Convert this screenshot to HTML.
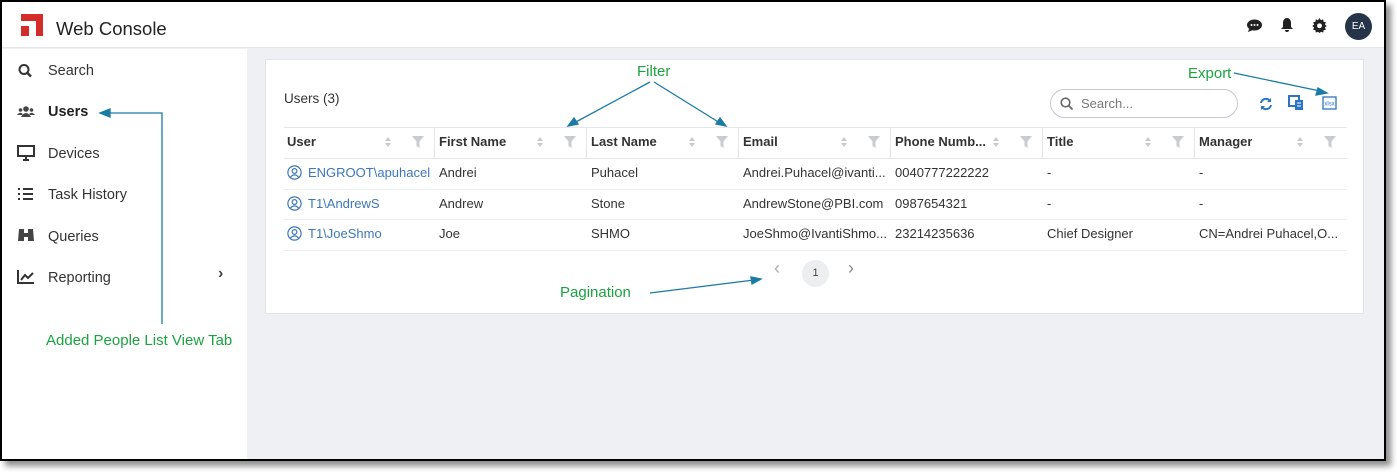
<!DOCTYPE html>
<html><head><style>
*{box-sizing:border-box;margin:0;padding:0}
body{width:1397px;height:475px;background:#fff;font-family:"Liberation Sans",sans-serif;position:relative;overflow:hidden}
.frame{position:absolute;left:0;top:0;width:1386px;height:461px;border:2px solid #000;background:#eef0f3;overflow:hidden;box-shadow:5px 5px 6px rgba(0,0,0,.45)}
.top{position:absolute;left:0;top:0;right:0;height:46px;background:#fff;border-bottom:1px solid #e3e6ea}
.side{position:absolute;left:0;top:47px;width:245px;bottom:0;background:#fff}
.nav{position:absolute;left:46px;font-size:14.5px;color:#333}
.ico{position:absolute;left:15px;width:18px;height:16px;color:#444}
.card{position:absolute;left:263px;top:57px;width:1099px;height:255px;background:#fff;border:1px solid #e1e4e8}
.th,.td{position:absolute;font-size:13px;color:#333;white-space:nowrap;overflow:hidden}
.th{font-weight:bold;color:#333}
.lnk{color:#3d78b8}
.g{color:#1aa340;font-size:15px;position:absolute}
.sort{position:absolute;width:8px;height:12px}
</style></head><body>
<div class="frame">
<div class="top">
 <svg style="position:absolute;left:19px;top:12px" width="22" height="22"><path d="M0 0H22V22H15V7H0Z M0 12H8V22H0Z" fill="#d62b2b"/></svg>
 <div style="position:absolute;left:54px;top:16px;font-size:18.5px;color:#222">Web Console</div>
 <svg style="position:absolute;left:1245px;top:17px" width="15" height="13"><ellipse cx="7.5" cy="6" rx="7.5" ry="5.5" fill="#222"/><path d="M2 10L1 13L6 11Z" fill="#222"/><circle cx="4.5" cy="6" r="1" fill="#fff"/><circle cx="7.5" cy="6" r="1" fill="#fff"/><circle cx="10.5" cy="6" r="1" fill="#fff"/></svg>
 <svg style="position:absolute;left:1278px;top:15px" width="14" height="16"><path d="M7 1C4 1 3 4 3 6V10L1 12H13L11 10V6C11 4 10 1 7 1Z M5 13H9A2 2 0 0 1 5 13Z" fill="#222"/></svg>
 <svg style="position:absolute;left:1310px;top:16px" width="15" height="15" viewBox="0 0 16 16"><path d="M8 0L9.5 2.2 12 1.5 12.3 4 14.8 4.5 13.8 7 15.8 8.5 13.8 10 14.8 12.5 12.3 13 12 15.5 9.5 14.8 8 16 6.5 14.8 4 15.5 3.7 13 1.2 12.5 2.2 10 0.2 8.5 2.2 7 1.2 4.5 3.7 4 4 1.5 6.5 2.2Z" fill="#222"/><circle cx="8" cy="8.3" r="2.6" fill="#fff"/></svg>
 <div style="position:absolute;left:1343px;top:11px;width:27px;height:27px;border-radius:50%;background:#263449;color:#fff;font-size:10px;text-align:center;line-height:27px">EA</div>
</div>
<div class="side">
 <svg class="ico" style="top:14px" viewBox="0 0 18 16"><circle cx="7" cy="6.5" r="4.5" fill="none" stroke="#333" stroke-width="2"/><path d="M10.5 10L14 13.5" stroke="#333" stroke-width="2.5"/></svg><div class="nav" style="top:14px">Search</div>
 <svg class="ico" style="top:55px" viewBox="0 0 18 16"><circle cx="9" cy="5" r="2.8" fill="#444"/><circle cx="3.5" cy="6" r="1.8" fill="#444"/><circle cx="14.5" cy="6" r="1.8" fill="#444"/><path d="M4 13Q9 5 14 13Z M0 11Q3 7 6 10L5 11Z M18 11Q15 7 12 10L13 11Z" fill="#444"/></svg><div class="nav" style="top:55px;font-weight:bold;color:#222">Users</div>
 <svg class="ico" style="top:96px" viewBox="0 0 18 16"><rect x="1" y="1" width="16" height="10" fill="none" stroke="#333" stroke-width="2"/><path d="M6 15H12M9 11V15" stroke="#333" stroke-width="2"/></svg><div class="nav" style="top:97px">Devices</div>
 <svg class="ico" style="top:137px" viewBox="0 0 18 16"><path d="M1 3H3M6 3H16M1 8H3M6 8H16M1 13H3M6 13H16" stroke="#333" stroke-width="2"/></svg><div class="nav" style="top:138px">Task History</div>
 <svg class="ico" style="top:178px" viewBox="0 0 18 16"><path d="M2 2H7V14H1Z M11 2H16L17 14H11Z M7 6H11V10H7Z" fill="#444"/></svg><div class="nav" style="top:180px">Queries</div>
 <svg class="ico" style="top:220px" viewBox="0 0 18 16"><path d="M1 1V14H17" stroke="#333" stroke-width="2" fill="none"/><path d="M4 11L8 6 11 9 16 4" stroke="#333" stroke-width="2" fill="none"/></svg><div class="nav" style="top:221px">Reporting</div>
 <div style="position:absolute;left:216px;top:216px;font-size:16px;color:#444;font-weight:bold">&#8250;</div>
</div>
<div class="card">
 <div style="position:absolute;left:18px;top:31px;font-size:13.5px;color:#333">Users (3)</div>
 <div style="position:absolute;left:784px;top:29px;width:188px;height:29px;border:1px solid #c6c9ce;border-radius:15px"><svg style="position:absolute;left:9px;top:7px" width="14" height="14"><circle cx="5.5" cy="5.5" r="4.3" fill="none" stroke="#666" stroke-width="1.6"/><path d="M8.5 8.5L12.5 12.5" stroke="#666" stroke-width="1.8"/></svg><span style="position:absolute;left:30px;top:6px;font-size:13px;color:#777">Search...</span></div>
 <svg style="position:absolute;left:993px;top:37px" width="14" height="14" viewBox="0 0 14 14"><path d="M2 6A5 5 0 0 1 11 4M12 8A5 5 0 0 1 3 10" stroke="#2c74c4" stroke-width="2" fill="none"/><path d="M12 1V5H8Z M2 13V9H6Z" fill="#2c74c4"/></svg>
 <svg style="position:absolute;left:1022px;top:35px" width="16" height="16"><rect x="1" y="1" width="10" height="10" fill="none" stroke="#2c74c4" stroke-width="2"/><rect x="7" y="5" width="8" height="10" fill="#2c74c4"/><path d="M9 8H13M9 11H13" stroke="#fff"/></svg>
 <svg style="position:absolute;left:1056px;top:36px" width="15" height="14"><rect x="1" y="1" width="13" height="12" fill="none" stroke="#2c74c4" stroke-width="1.3"/><text x="7.5" y="9.5" font-size="6" fill="#2c74c4" text-anchor="middle" font-family="Liberation Sans">xlsx</text></svg>
 <div style="position:absolute;left:18px;top:67px;width:1063px;height:1px;background:#e4e6e9"></div>
 <div style="position:absolute;left:18px;top:98px;width:1063px;height:1px;background:#e4e6e9"></div>
 <div style="position:absolute;left:18px;top:129px;width:1063px;height:1px;background:#eceef0"></div>
 <div style="position:absolute;left:18px;top:159px;width:1063px;height:1px;background:#eceef0"></div>
 <div style="position:absolute;left:18px;top:190px;width:1063px;height:1px;background:#eceef0"></div>
 <div id="cols"></div>
 <div style="position:absolute;left:536px;top:200px;width:27px;height:27px;border-radius:50%;background:#eceef0;font-size:11px;text-align:center;line-height:27px;color:#444">1</div>
 <div style="position:absolute;left:508px;top:198px;font-size:18px;color:#aaa">&#8249;</div>
 <div style="position:absolute;left:582px;top:198px;font-size:18px;color:#888">&#8250;</div>
</div>
<div class="g" style="left:635px;top:61px">Filter</div>
<div class="g" style="left:1186px;top:63px">Export</div>
<div class="g" style="left:558px;top:282px">Pagination</div>
<div class="g" style="left:44px;top:330px">Added People List View Tab</div>
<svg style="position:absolute;left:0;top:0" width="1390" height="470">
 <g stroke="#1a7ba6" stroke-width="1.3" fill="#1a7ba6">
 <path d="M160 322V111H105" fill="none"/><path d="M98 111L108 107V115Z"/>
 <path d="M648 80L572 121" fill="none"/><path d="M566 124L572 116 576 122Z"/>
 <path d="M652 80L718 121" fill="none"/><path d="M724 124L714 122 718 116Z"/>
 <path d="M1232 71L1318 89" fill="none"/><path d="M1325 91L1314 93 1316 86Z"/>
 <path d="M648 291L752 278" fill="none"/><path d="M759 277L750 282 749 275Z"/>
 </g>
</svg>
</div>
<script>
var cols=[["User",283],["First Name",435],["Last Name",587],["Email",739],["Phone Numb...",891],["Title",1043],["Manager",1195]];
var rows=[["ENGROOT\\apuhacel","Andrei","Puhacel","Andrei.Puhacel@ivanti...","0040777222222","-","-"],["T1\\AndrewS","Andrew","Stone","AndrewStone@PBI.com","0987654321","-","-"],["T1\\JoeShmo","Joe","SHMO","JoeShmo@IvantiShmo....","23214235636","Chief Designer","CN=Andrei Puhacel,O..."]];
var h="",ox=263+2;
cols.forEach(function(c,i){var x=c[1]-ox;
h+='<div class="th" style="left:'+(x+3)+'px;top:74px">'+c[0]+'</div>';
h+='<svg class="sort" style="left:'+(x+100)+'px;top:76px" viewBox="0 0 8 12"><path d="M4 1L7 5H1Z M4 11L7 7H1Z" fill="#c8cbd0"/></svg>';
h+='<svg style="position:absolute;left:'+(x+128)+'px;top:76px" width="12" height="12"><path d="M0 0H12L7.5 5.5V12L4.5 10V5.5Z" fill="#c8cbd0"/></svg>';
if(i>0)h+='<div style="position:absolute;left:'+(x-2)+'px;top:67px;width:1px;height:31px;background:#e4e6e9"></div>';
rows.forEach(function(r,j){var y=105+j*30.5;
if(i==0)h+='<svg style="position:absolute;left:'+(x+3)+'px;top:'+(y)+'px" width="15" height="15"><circle cx="7.5" cy="7.5" r="6.6" fill="none" stroke="#3d78b8" stroke-width="1.2"/><circle cx="7.5" cy="6" r="2.4" fill="none" stroke="#3d78b8" stroke-width="1.2"/><path d="M3.2 12.3Q7.5 7.5 11.8 12.3" fill="none" stroke="#3d78b8" stroke-width="1.2"/></svg>';
h+='<div class="td'+(i==0?' lnk':'')+'" style="left:'+(x+(i==0?24:3))+'px;top:'+y+'px;width:'+(i==0?125:145)+'px">'+r[i]+'</div>';});
});
document.getElementById("cols").innerHTML=h;
</script>
</body></html>
